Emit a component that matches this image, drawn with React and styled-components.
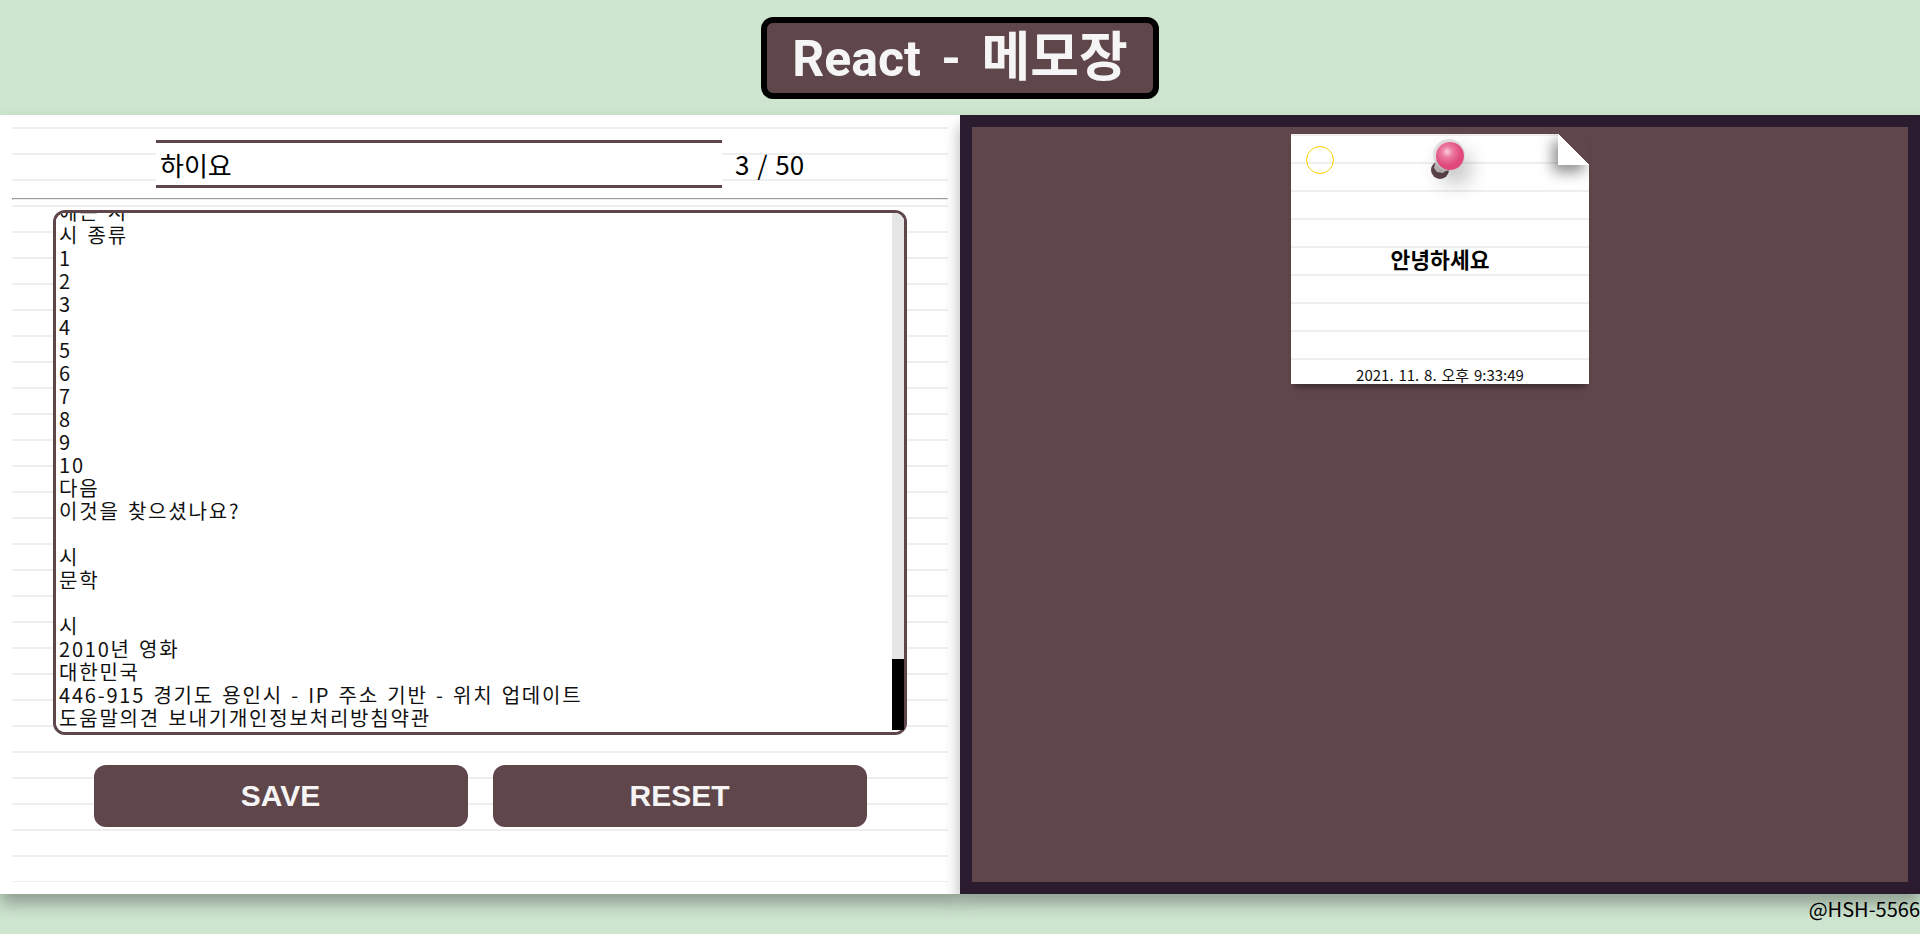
import React, { useLayoutEffect, useRef } from 'react'
import styled, { createGlobalStyle } from 'styled-components'

const visibleLines = [
    '에든 시',
    '시 종류',
    '1', '2', '3', '4', '5', '6', '7', '8', '9', '10',
    '다음',
    '이것을 찾으셨나요?',
    '',
    '시',
    '문학',
    '',
    '시',
    '2010년 영화',
    '대한민국',
    '446-915 경기도 용인시 - IP 주소 기반 - 위치 업데이트',
    '도움말의견 보내기개인정보처리방침약관',
]

const memoText = Array(7).fill(visibleLines.join('\n')).join('\n')

function App() {
    const textRef = useRef(null)

    useLayoutEffect(() => {
        textRef.current.scrollTop = textRef.current.scrollHeight
    }, [])

    return (
        <Page>
            <GlobalStyle />
            <Header>
                <Title>React - <TitleHangul>메모장</TitleHangul></Title>
            </Header>
            <Main>
                <Editor>
                    <TitleRow>
                        <TitleInput defaultValue="하이요" />
                        <Counter>3 / 50</Counter>
                    </TitleRow>
                    <Divider />
                    <MemoBox>
                        <MemoArea ref={textRef} defaultValue={memoText} spellCheck={false} />
                        <ScrollTrack>
                            <ScrollThumb />
                        </ScrollTrack>
                    </MemoBox>
                    <Buttons>
                        <ActionButton>SAVE</ActionButton>
                        <ActionButton>RESET</ActionButton>
                    </Buttons>
                </Editor>
                <Board>
                    <Note>
                        <Marker />
                        <PinNeedle viewBox="0 0 20 20">
                            <circle cx="10" cy="10" r="9" fill="#5f464b" />
                            <path d="M6 0 L4 8 L7 12 L13 13 L20 8 L20 0z" fill="#c2bebe" />
                        </PinNeedle>
                        <PinHead />
                        <Fold />
                        <NoteTitle>안녕하세요</NoteTitle>
                        <NoteDate>2021. 11. 8. 오후 9:33:49</NoteDate>
                    </Note>
                </Board>
            </Main>
            <Footer>@HSH-5566</Footer>
        </Page>
    )
}

export default App

const GlobalStyle = createGlobalStyle`
    html, body {
        margin: 0;
        height: 100%;
        overflow: hidden;
    }

    body {
        font-family: "Noto Sans CJK KR", "Noto Sans", sans-serif;
    }
`

const Page = styled.div`
    display: flex;
    flex-direction: column;
    height: 100vh;
    background-color: #cee5d0;
`

const Header = styled.header`
    display: flex;
    justify-content: center;
    align-items: center;
    height: 115px;
    flex-shrink: 0;
`

const Title = styled.h1`
    box-sizing: border-box;
    width: 398px;
    height: 82px;
    margin: 0;
    border: 6px solid #000;
    border-radius: 12px;
    background-color: #5f464b;
    color: #f5f5f5;
    font-family: Roboto, "Noto Sans CJK KR", sans-serif;
    font-size: 50px;
    font-weight: 700;
    line-height: 73px;
    text-align: center;
    word-spacing: 8px;
`

const TitleHangul = styled.span`
    font-family: "Noto Sans CJK KR", sans-serif;
    font-size: 53px;
    line-height: 1;
`

const Main = styled.main`
    display: grid;
    grid-template-columns: 1fr 1fr;
    height: 779px;
    flex-shrink: 0;
`

const Editor = styled.section`
    box-sizing: border-box;
    display: flex;
    flex-direction: column;
    align-items: center;
    padding: 13px 0 0;
    border: 12px solid #fff;
    background-color: #fff;
    background-image: linear-gradient(#eee 2px, transparent 2px);
    background-size: 100% 26px;
    background-clip: padding-box;
    background-origin: padding-box;
    box-shadow: 0 10px 15px rgba(0, 0, 0, 0.3);
`

const TitleRow = styled.div`
    display: flex;
    align-items: center;
    gap: 13px;
`

const TitleInput = styled.input`
    box-sizing: border-box;
    width: 566px;
    height: 48px;
    padding: 0 4px;
    border: 0;
    border-top: 3px solid #5f464b;
    border-bottom: 3px solid #5f464b;
    outline: none;
    border-radius: 0;
    background-color: #fff;
    color: #000;
    font-family: inherit;
    font-size: 26px;
`

const Counter = styled.span`
    width: 69px;
    color: #000;
    font-size: 26px;
    line-height: 48px;
    word-spacing: 2px;
    white-space: nowrap;
`

const Divider = styled.hr`
    align-self: stretch;
    margin: 10px 0;
`

const MemoBox = styled.div`
    position: relative;
    flex-shrink: 0;
    width: 854px;
    height: 525px;
`

const MemoArea = styled.textarea`
    box-sizing: border-box;
    display: block;
    width: 100%;
    height: 100%;
    padding: 2px 2px 0 3px;
    border: 3px solid #5f464b;
    border-radius: 12px;
    outline: none;
    resize: none;
    background-color: #fff;
    color: #111;
    font-family: inherit;
    font-size: 20px;
    line-height: 23px;
    letter-spacing: 1.8px;
    word-spacing: 2px;
`

const ScrollTrack = styled.div`
    position: absolute;
    top: 3px;
    right: 3px;
    bottom: 5px;
    display: flex;
    flex-direction: column;
    justify-content: flex-end;
    width: 12px;
    border-top-right-radius: 9px;
    background-color: #e6e6e6;
`

const ScrollThumb = styled.div`
    height: 71px;
    background-color: #000;
`

const Buttons = styled.div`
    display: flex;
    gap: 25px;
    margin-top: 30px;
`

const ActionButton = styled.button`
    width: 374px;
    height: 62px;
    padding: 0;
    border: 0;
    border-radius: 12px;
    background-color: #5f464b;
    color: #f5f5f5;
    font-family: "Liberation Sans", Arial, sans-serif;
    font-size: 30px;
    font-weight: 700;
`

const Board = styled.section`
    box-sizing: border-box;
    position: relative;
    display: flex;
    flex-wrap: wrap;
    justify-content: center;
    align-items: flex-start;
    border: 12px solid #2a1c2e;
    background-color: #5f464b;
    box-shadow: 0 10px 15px rgba(0, 0, 0, 0.3);
`

const Note = styled.article`
    position: relative;
    box-sizing: border-box;
    display: grid;
    grid-template-rows: 1fr auto 1fr;
    justify-items: center;
    width: 298px;
    height: 250px;
    margin: 7px;
    background-color: #fff;
    background-image: linear-gradient(#eee 2px, transparent 2px);
    background-size: 100% 28px;
    box-shadow: 0 6px 6px -3px rgba(0, 0, 0, 0.4);
`

const Marker = styled.span`
    position: absolute;
    top: 12px;
    left: 15px;
    box-sizing: border-box;
    width: 28px;
    height: 28px;
    border: 1px solid #ffd000;
    border-radius: 50%;
`

const PinNeedle = styled.svg`
    position: absolute;
    top: 26px;
    left: 139px;
    width: 20px;
    height: 20px;
`

const PinHead = styled.span`
    position: absolute;
    top: 8px;
    left: 145px;
    width: 28px;
    height: 28px;
    border-radius: 50%;
    background: radial-gradient(circle at 40% 35%, #f8d0dc 0, #ec7ba0 22%, #e04a7c 55%, #dc4476 100%);
    box-shadow: -1px -1px 0 2px rgba(205, 205, 205, 0.6), 5px 12px 22px rgba(0, 0, 0, 0.32);
`

const Fold = styled.span`
    position: absolute;
    top: 0;
    right: 0;
    width: 31px;
    height: 31px;
    background: linear-gradient(45deg, #fff 50%, #5f464b 50.5%);
    box-shadow: -5px 7px 14px rgba(0, 0, 0, 0.45);
    clip-path: inset(0 0 -30px -30px);
`

const NoteTitle = styled.h3`
    grid-row: 2;
    margin: 0;
    color: #000;
    font-size: 21.5px;
    font-weight: 700;
    line-height: 30px;
`

const NoteDate = styled.time`
    grid-row: 3;
    align-self: end;
    color: #111;
    font-size: 15px;
    line-height: 19px;
    word-spacing: 1.5px;
`

const Footer = styled.footer`
    flex: 1;
    color: #000;
    font-size: 20px;
    line-height: 30px;
    text-align: right;
`
